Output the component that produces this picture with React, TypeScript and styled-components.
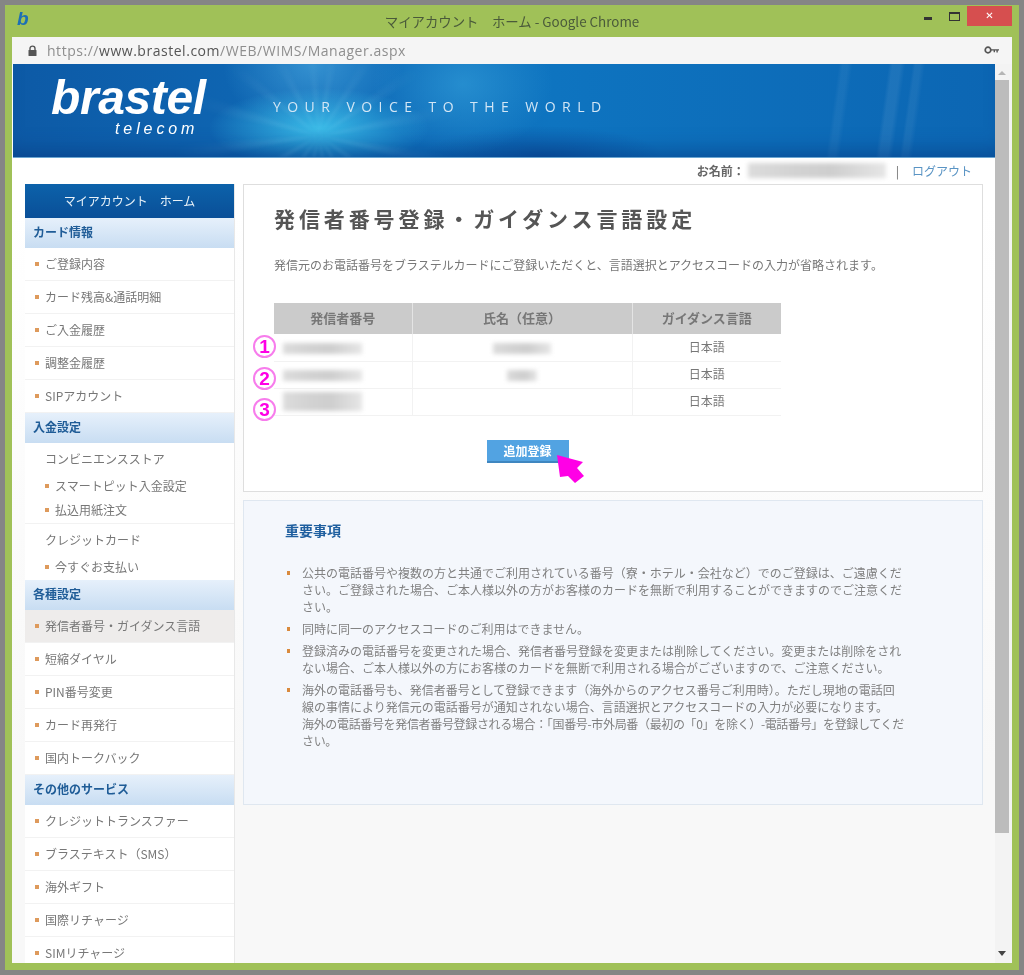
import { FC } from "react"
import styled, { createGlobalStyle } from "styled-components"

const FONT = `"Noto Sans CJK JP", "Liberation Sans", sans-serif`

type MenuRow =
  | { kind: "section"; label: string }
  | { kind: "item"; label: string; active?: boolean }
  | { kind: "plain"; label: string }
  | { kind: "sub"; label: string; last?: boolean }

const menu: MenuRow[] = [
  { kind: "section", label: "カード情報" },
  { kind: "item", label: "ご登録内容" },
  { kind: "item", label: "カード残高&通話明細" },
  { kind: "item", label: "ご入金履歴" },
  { kind: "item", label: "調整金履歴" },
  { kind: "item", label: "SIPアカウント" },
  { kind: "section", label: "入金設定" },
  { kind: "plain", label: "コンビニエンスストア" },
  { kind: "sub", label: "スマートピット入金設定" },
  { kind: "sub", label: "払込用紙注文", last: true },
  { kind: "plain", label: "クレジットカード" },
  { kind: "sub", label: "今すぐお支払い" },
  { kind: "section", label: "各種設定" },
  { kind: "item", label: "発信者番号・ガイダンス言語", active: true },
  { kind: "item", label: "短縮ダイヤル" },
  { kind: "item", label: "PIN番号変更" },
  { kind: "item", label: "カード再発行" },
  { kind: "item", label: "国内トークバック" },
  { kind: "section", label: "その他のサービス" },
  { kind: "item", label: "クレジットトランスファー" },
  { kind: "item", label: "ブラステキスト（SMS）" },
  { kind: "item", label: "海外ギフト" },
  { kind: "item", label: "国際リチャージ" },
  { kind: "item", label: "SIMリチャージ" },
]

const rows = [
  { mark: "1", markTop: 1, numH: 11, nameW: 58 },
  { mark: "2", markTop: 5, numH: 11, nameW: 30 },
  { mark: "3", markTop: 9, numH: 19, nameW: 0 },
]

const notes = [
  {
    text: "公共の電話番号や複数の方と共通でご利用されている番号（寮・ホテル・会社など）でのご登録は、ご遠慮ください。ご登録された場合、ご本人様以外の方がお客様のカードを無断で利用することができますのでご注意ください。",
  },
  { text: "同時に同一のアクセスコードのご利用はできません。" },
  {
    text: "登録済みの電話番号を変更された場合、発信者番号登録を変更または削除してください。変更または削除をされない場合、ご本人様以外の方にお客様のカードを無断で利用される場合がございますので、ご注意ください。",
  },
  {
    text: "海外の電話番号も、発信者番号として登録できます（海外からのアクセス番号ご利用時）。ただし現地の電話回線の事情により発信元の電話番号が通知されない場合、言語選択とアクセスコードの入力が必要になります。\n",
    tail: "海外の電話番号を発信者番号登録される場合：「国番号-市外局番（最初の「0」を除く）-電話番号」を登録してください。",
  },
]

const App: FC = () => {
  return (
    <>
      <GlobalStyle />
      <Frame>
        <Window>
          <TitleBar>
            <AppMark>b</AppMark>
            <TitleText>マイアカウント　ホーム - Google Chrome</TitleText>
            <WindowControls>
              <MinButton />
              <MaxButton />
              <CloseButton>✕</CloseButton>
            </WindowControls>
          </TitleBar>
          <AddressBar>
            <svg width="11" height="12" viewBox="0 0 11 12">
              <path d="M3 5V3.6a2.5 2.5 0 0 1 5 0V5" fill="none" stroke="#555" strokeWidth="1.4" />
              <rect x="1.5" y="5" width="8" height="6" rx="0.6" fill="#555" />
            </svg>
            <Url>
              https://<UrlHost>www.brastel.com</UrlHost>/WEB/WIMS/Manager.aspx
            </Url>
            <KeyIcon width="16" height="9" viewBox="0 0 16 9">
              <circle cx="4" cy="4" r="2.8" fill="none" stroke="#555" strokeWidth="1.7" />
              <path d="M7 3.2h8v1.4h-1.2v2h-1.4v-2H11v1.6H9.6V4.6H7z" fill="#555" />
            </KeyIcon>
          </AddressBar>
          <Viewport>
            <Page>
              <Banner>
                <Logo>
                  <LogoWord>brastel</LogoWord>
                  <LogoSub>telecom</LogoSub>
                </Logo>
                <Slogan>YOUR VOICE TO THE WORLD</Slogan>
              </Banner>
              <UserRow>
                <UserLabel>お名前：</UserLabel>
                <Redacted $w={138} $h={15} />
                <Divider>|</Divider>
                <Logout>ログアウト</Logout>
              </UserRow>
              <Columns>
                <Sidebar>
                  <SideHead>マイアカウント　ホーム</SideHead>
                  {menu.map((row) => {
                    if (row.kind === "section") return <SideSection key={row.label}>{row.label}</SideSection>
                    if (row.kind === "plain") return <SidePlain key={row.label}>{row.label}</SidePlain>
                    if (row.kind === "sub") return <SideSub key={row.label} $last={row.last}>{row.label}</SideSub>
                    return <SideItem key={row.label} $active={row.active}>{row.label}</SideItem>
                  })}
                </Sidebar>
                <Content>
                  <MainPanel>
                    <Heading>発信者番号登録・ガイダンス言語設定</Heading>
                    <Lead>発信元のお電話番号をブラステルカードにご登録いただくと、言語選択とアクセスコードの入力が省略されます。</Lead>
                    <TableWrap>
                      <NumberTable>
                        <thead>
                          <tr>
                            <HeadCell $w={138}>発信者番号</HeadCell>
                            <HeadCell $w={220}>氏名（任意）</HeadCell>
                            <HeadCell $w={149}>ガイダンス言語</HeadCell>
                          </tr>
                        </thead>
                        <tbody>
                          {rows.map((row) => (
                            <tr key={row.mark}>
                              <NumberCell>
                                <Mark $top={row.markTop}>{row.mark}</Mark>
                                <Redacted $w={79} $h={row.numH} />
                              </NumberCell>
                              <BodyCell>{row.nameW > 0 && <Redacted $w={row.nameW} $h={11} />}</BodyCell>
                              <BodyCell>日本語</BodyCell>
                            </tr>
                          ))}
                        </tbody>
                      </NumberTable>
                      <ButtonRow>
                        <AddButton>
                          追加登録
                          <Pointer width="30" height="30" viewBox="0 0 30 30">
                            <path d="M1 1L27 8 21 14 28 22 19 29 12 22 4 23z" fill="#ff00e6" />
                          </Pointer>
                        </AddButton>
                      </ButtonRow>
                    </TableWrap>
                  </MainPanel>
                  <NotePanel>
                    <NoteTitle>重要事項</NoteTitle>
                    <NoteList>
                      {notes.map((note) => (
                        <NoteItem key={note.text.slice(0, 8)}>
                          {note.text}
                          {note.tail && <TightLine>{note.tail}</TightLine>}
                        </NoteItem>
                      ))}
                    </NoteList>
                  </NotePanel>
                </Content>
              </Columns>
            </Page>
            <Scrollbar>
              <ArrowUp />
              <Thumb />
              <ArrowDown />
            </Scrollbar>
          </Viewport>
        </Window>
      </Frame>
    </>
  )
}

export default App

const GlobalStyle = createGlobalStyle`
  html, body {
    margin: 0;
    padding: 0;
    background: #858585;
  }

  * {
    box-sizing: border-box;
  }
`

const Frame = styled.div`
  width: 1024px;
  height: 975px;
  padding: 5px;
  background: #858585;
  overflow: hidden;
  font-family: ${FONT};
  filter: blur(0.5px);
`

const Window = styled.div`
  height: 965px;
  padding: 0 7px 7px;
  background: #a0c158;
  display: flex;
  flex-direction: column;
`

const TitleBar = styled.div`
  height: 32px;
  flex: none;
  position: relative;
  display: flex;
  align-items: center;
  justify-content: center;
`

const AppMark = styled.span`
  position: absolute;
  left: 5px;
  top: 3px;
  font: italic bold 19px "Liberation Sans", sans-serif;
  color: #1c6fb5;
`

const TitleText = styled.span`
  font-size: 13.4px;
  color: #4a5a3a;
`

const WindowControls = styled.div`
  position: absolute;
  right: 0;
  top: 1px;
  display: flex;
  align-items: flex-start;
`

const MinButton = styled.span`
  width: 8px;
  height: 3px;
  margin: 11px 17px 0 0;
  background: #333;
`

const MaxButton = styled.span`
  width: 11px;
  height: 9px;
  margin: 6px 7px 0 0;
  border: 1px solid #333;
  border-top-width: 2px;
`

const CloseButton = styled.span`
  width: 45px;
  height: 20px;
  background: #d64f4f;
  color: #fff;
  font: bold 10px/20px "DejaVu Sans", sans-serif;
  text-align: center;
`

const AddressBar = styled.div`
  height: 27px;
  flex: none;
  padding: 0 12px 0 15px;
  background: #f5f5f5;
  display: flex;
  align-items: center;
  gap: 9px;
`

const Url = styled.span`
  font: 14px "Open Sans", sans-serif;
  letter-spacing: 0.53px;
  color: #8e8e8e;
`

const UrlHost = styled.span`
  color: #555;
`

const KeyIcon = styled.svg`
  margin-left: auto;
`

const Viewport = styled.div`
  flex: 1;
  min-height: 0;
  display: flex;
`

const Page = styled.div`
  width: 983px;
  flex: none;
  overflow: hidden;
  background: linear-gradient(#fff 0, #fff 140px, #f8f8f8 700px);
`

const Banner = styled.div`
  height: 94px;
  margin-left: 1px;
  padding-left: 38px;
  position: relative;
  display: flex;
  border-bottom: 1px solid #6aa6d2;
  background:
    radial-gradient(ellipse 110px 40px at 306px 64px, rgba(64, 200, 240, 0.85), rgba(40, 150, 220, 0) 100%),
    radial-gradient(ellipse 90px 70px at 300px 0, rgba(90, 185, 235, 0.5), rgba(40, 150, 220, 0) 100%),
    radial-gradient(ellipse 90px 70px at 450px 20px, rgba(60, 170, 225, 0.5), rgba(40, 150, 220, 0) 100%),
    radial-gradient(ellipse 120px 30px at 530px 92px, rgba(8, 50, 130, 0.45), rgba(8, 50, 130, 0) 100%),
    linear-gradient(98deg, transparent 83%, rgba(255, 255, 255, 0.05) 83.4% 83.9%, transparent 84.4% 88%, rgba(255, 255, 255, 0.07) 88.4% 89.2%, transparent 89.7% 90.4%, rgba(255, 255, 255, 0.06) 90.7% 91.2%, transparent 91.7%),
    linear-gradient(90deg, #0d5aa6 0, #0f6cb9 38%, #0e74c0 55%, #0c66b3 100%);
  box-shadow: inset 0 -18px 20px -12px rgba(5, 50, 120, 0.5);

  &::before {
    content: "";
    position: absolute;
    inset: 0;
    filter: blur(1.5px);
    background: repeating-conic-gradient(from 0deg at 306px 72px, rgba(190, 235, 255, 0) 0 5deg, rgba(190, 235, 255, 0.1) 9deg 11deg, rgba(190, 235, 255, 0) 15deg 23deg);
    -webkit-mask-image: radial-gradient(ellipse 150px 90px at 306px 72px, #000 20%, transparent 100%);
    mask-image: radial-gradient(ellipse 150px 90px at 306px 72px, #000 20%, transparent 100%);
  }
`

const Logo = styled.div`
  width: 222px;
  flex: none;
  padding-top: 13px;
  position: relative;
  color: #fff;
  display: flex;
  flex-direction: column;
`

const LogoWord = styled.span`
  font: italic bold 48px/42px "Liberation Sans", sans-serif;
  letter-spacing: -0.4px;
`

const LogoSub = styled.span`
  margin-left: 64px;
  font: italic 16px/20px "Liberation Sans", sans-serif;
  letter-spacing: 3.9px;
`

const Slogan = styled.span`
  margin-top: 33px;
  position: relative;
  font: 14px/20px "Open Sans", sans-serif;
  letter-spacing: 6.45px;
  color: #d3e6f5;
  white-space: nowrap;
`

const UserRow = styled.div`
  height: 26px;
  padding: 0 23px 2px 0;
  display: flex;
  align-items: center;
  justify-content: flex-end;
  font-size: 12px;
`

const UserLabel = styled.span`
  font-weight: 700;
  color: #666;
  margin-right: 3px;
`

const Divider = styled.span`
  margin: 0 13px 0 10px;
  color: #666;
`

const Logout = styled.span`
  color: #5a94c4;
`

const Redacted = styled.span<{ $w: number; $h: number }>`
  display: inline-block;
  vertical-align: middle;
  width: ${(p) => p.$w}px;
  height: ${(p) => p.$h}px;
  background: linear-gradient(90deg, #dcdcdc 0, #d2d2d2 35%, #cecece 60%, #e6e6e6 100%);
  filter: blur(2px);
`

const Columns = styled.div`
  padding-left: 13px;
  display: flex;
  align-items: flex-start;
  gap: 8px;
`

const Sidebar = styled.nav`
  width: 210px;
  flex: none;
  background: #fff;
  border-right: 1px solid #e8e8e8;
  font-size: 12px;
  color: #777;
`

const SideHead = styled.div`
  height: 34px;
  background: linear-gradient(#0c62aa, #0a4f98);
  color: #e8f1f8;
  font-size: 12px;
  line-height: 33px;
  text-align: center;
`

const SideSection = styled.div`
  height: 30px;
  padding-left: 8px;
  background: linear-gradient(#e6f0fb, #c8ddf2);
  color: #1f5c97;
  font-weight: 700;
  line-height: 27px;
`

const SideItem = styled.div<{ $active?: boolean }>`
  height: 33px;
  padding-left: 20px;
  position: relative;
  line-height: 32px;
  border-bottom: 1px solid #f2f2f2;
  background: ${(p) => (p.$active ? "#eeeceb" : "#fff")};

  &::before {
    content: "";
    position: absolute;
    left: 10px;
    top: 14px;
    width: 4px;
    height: 4px;
    background: #de9a5c;
  }
`

const SidePlain = styled.div`
  height: 32px;
  padding-left: 20px;
  line-height: 31px;
`

const SideSub = styled.div<{ $last?: boolean }>`
  height: ${(p) => (p.$last ? 25 : 24)}px;
  padding-left: 30px;
  position: relative;
  line-height: 22px;
  border-bottom: ${(p) => (p.$last ? "1px solid #f2f2f2" : "none")};

  &::before {
    content: "";
    position: absolute;
    left: 20px;
    top: 9px;
    width: 4px;
    height: 4px;
    background: #de9a5c;
  }
`

const Content = styled.main`
  width: 740px;
  flex: none;
  display: flex;
  flex-direction: column;
  gap: 8px;
`

const MainPanel = styled.section`
  height: 308px;
  padding: 18px 30px 0;
  background: #fff;
  border: 1px solid #dedede;
`

const Heading = styled.h1`
  margin: 0;
  font-size: 21px;
  line-height: 30px;
  font-weight: 700;
  letter-spacing: 3.9px;
  color: #555;
  white-space: nowrap;
`

const Lead = styled.p`
  margin: 22px 0 0;
  font-size: 12px;
  line-height: 20px;
  color: #777;
  white-space: nowrap;
`

const TableWrap = styled.div`
  width: 507px;
  margin-top: 28px;
`

const NumberTable = styled.table`
  width: 507px;
  table-layout: fixed;
  border-collapse: collapse;
  font-size: 12px;
  color: #777;
`

const HeadCell = styled.th<{ $w: number }>`
  width: ${(p) => p.$w}px;
  height: 31px;
  padding: 0 0 2px;
  background: #cbcbcb;
  border-left: 1px solid #e4e4e4;
  font-size: 13px;
  font-weight: 700;
  color: #777;

  &:first-child {
    border-left: none;
  }
`

const BodyCell = styled.td`
  height: 27px;
  padding: 0 0 2px;
  text-align: center;
  border-left: 1px solid #f2f2f2;
  border-bottom: 1px solid #f2f2f2;
`

const NumberCell = styled(BodyCell)`
  position: relative;
  padding-left: 9px;
  text-align: left;
  border-left: none;
`

const Mark = styled.span<{ $top: number }>`
  position: absolute;
  left: -21px;
  top: ${(p) => p.$top}px;
  width: 23px;
  height: 23px;
  border: 2px solid #f77cec;
  border-radius: 50%;
  background: #fff;
  font: bold 19px/19px "Liberation Sans", sans-serif;
  color: #ff00e6;
  text-align: center;
`

const ButtonRow = styled.div`
  margin-top: 24px;
  display: flex;
  justify-content: center;
`

const AddButton = styled.div`
  width: 82px;
  height: 23px;
  position: relative;
  background: #52a3e2;
  border-bottom: 2px solid #3f86c0;
  color: #fff;
  font-size: 12px;
  font-weight: 700;
  line-height: 21px;
  text-align: center;
`

const Pointer = styled.svg`
  position: absolute;
  left: 69px;
  top: 14px;
`

const NotePanel = styled.section`
  height: 305px;
  padding: 18px 77px 0 41px;
  background: #f4f7fc;
  border: 1px solid #dfe7f0;
`

const NoteTitle = styled.h2`
  margin: 0;
  font-size: 14px;
  line-height: 22px;
  font-weight: 700;
  color: #1f5f9f;
`

const NoteList = styled.ul`
  margin: 23px 0 0;
  padding: 0;
  list-style: none;
  display: flex;
  flex-direction: column;
  gap: 5px;
`

const NoteItem = styled.li`
  position: relative;
  padding-left: 17px;
  font-size: 12px;
  line-height: 17px;
  color: #808080;
  white-space: pre-line;
  line-break: strict;

  &::before {
    content: "";
    position: absolute;
    left: 2px;
    top: 7px;
    width: 3px;
    height: 4px;
    background: #d98a3d;
  }
`

const TightLine = styled.span`
  letter-spacing: -0.34px;
`

const Scrollbar = styled.div`
  flex: 1;
  padding-right: 3px;
  display: flex;
  flex-direction: column;
  align-items: center;
  background: #f3f3f3;
`

const ArrowUp = styled.span`
  margin: 7px 0 5px;
  width: 0;
  height: 0;
  border: 4px solid transparent;
  border-top: none;
  border-bottom: 4px solid #b5b5b5;
`

const Thumb = styled.div`
  width: 100%;
  height: 753px;
  background: #bcbcbc;
`

const ArrowDown = styled.span`
  margin-top: auto;
  margin-bottom: 7px;
  width: 0;
  height: 0;
  border: 4px solid transparent;
  border-bottom: none;
  border-top: 5px solid #444;
`
